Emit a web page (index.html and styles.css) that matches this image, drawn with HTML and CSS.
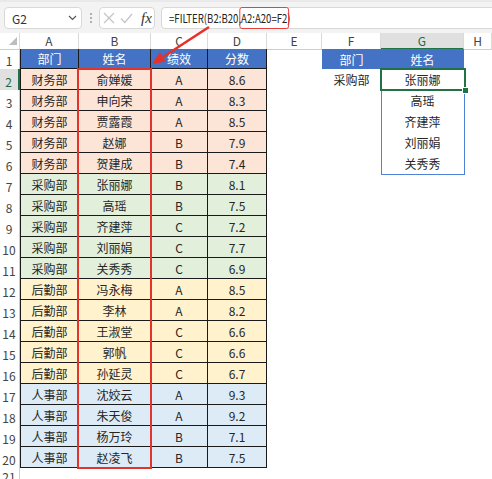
FILE: index.html
```html
<!DOCTYPE html>
<html lang="zh-CN">
<head>
<meta charset="utf-8">
<link rel="stylesheet" href="styles.css">
</head>
<body>
<div class="app">
  <div class="toolbar">
    <div class="namebox"><span>G2</span><svg class="chev" width="9" height="6" viewBox="0 0 9 6"><path d="M1 1l3.5 3.5L8 1" fill="none" stroke="#555" stroke-width="1.2"/></svg></div>
    <div class="grip"><i></i><i></i><i></i></div>
    <div class="btns">
      <svg width="12" height="12" viewBox="0 0 12 12"><path d="M1 1l10 10M11 1L1 11" stroke="#c4c4c4" stroke-width="1.2" fill="none"/></svg>
      <svg width="13" height="11" viewBox="0 0 13 11"><path d="M1 5.5l3.8 4L12 1" stroke="#c4c4c4" stroke-width="1.2" fill="none"/></svg>
      <span class="fx">fx</span>
    </div>
    <div class="formula"><span class="ftext">=FILTER(B2:B20,<span class="hl">A2:A20=F2</span>)</span></div>
  </div>

  <div class="sheet">
    <div class="row colhead">
      <div class="ch corner"><svg width="20" height="16" viewBox="0 0 20 16"><polygon points="17,4 17,12 9,12" fill="#bdbdbd"/></svg></div>
      <div class="ch">A</div><div class="ch">B</div><div class="ch">C</div><div class="ch">D</div><div class="ch">E</div><div class="ch">F</div><div class="ch sel">G</div><div class="ch">H</div>
    </div>
    <div class="row r1">
      <div class="rh">1</div>
      <div class="c t a hd">部门</div><div class="c t hd">姓名</div><div class="c t hd">绩效</div><div class="c t hd">分数</div>
      <div class="c"></div><div class="c hd">部门</div><div class="c hd">姓名</div><div class="c"></div>
    </div>
    <div class="row">
      <div class="rh sel">2</div>
      <div class="c t a p">财务部</div><div class="c t p">俞婵媛</div><div class="c t p">A</div><div class="c t p">8.6</div>
      <div class="c"></div><div class="c">采购部</div><div class="c">张丽娜</div><div class="c"></div>
    </div>
    <div class="row">
      <div class="rh">3</div>
      <div class="c t a p">财务部</div><div class="c t p">申向荣</div><div class="c t p">A</div><div class="c t p">8.3</div>
      <div class="c"></div><div class="c"></div><div class="c">高瑶</div><div class="c"></div>
    </div>
    <div class="row">
      <div class="rh">4</div>
      <div class="c t a p">财务部</div><div class="c t p">贾露霞</div><div class="c t p">A</div><div class="c t p">8.5</div>
      <div class="c"></div><div class="c"></div><div class="c">齐建萍</div><div class="c"></div>
    </div>
    <div class="row">
      <div class="rh">5</div>
      <div class="c t a p">财务部</div><div class="c t p">赵娜</div><div class="c t p">B</div><div class="c t p">7.9</div>
      <div class="c"></div><div class="c"></div><div class="c">刘丽娟</div><div class="c"></div>
    </div>
    <div class="row">
      <div class="rh">6</div>
      <div class="c t a p">财务部</div><div class="c t p">贺建成</div><div class="c t p">B</div><div class="c t p">7.4</div>
      <div class="c"></div><div class="c"></div><div class="c">关秀秀</div><div class="c"></div>
    </div>
    <div class="row">
      <div class="rh">7</div>
      <div class="c t a g">采购部</div><div class="c t g">张丽娜</div><div class="c t g">B</div><div class="c t g">8.1</div>
      <div class="c"></div><div class="c"></div><div class="c"></div><div class="c"></div>
    </div>
    <div class="row">
      <div class="rh">8</div>
      <div class="c t a g">采购部</div><div class="c t g">高瑶</div><div class="c t g">B</div><div class="c t g">7.5</div>
      <div class="c"></div><div class="c"></div><div class="c"></div><div class="c"></div>
    </div>
    <div class="row">
      <div class="rh">9</div>
      <div class="c t a g">采购部</div><div class="c t g">齐建萍</div><div class="c t g">C</div><div class="c t g">7.2</div>
      <div class="c"></div><div class="c"></div><div class="c"></div><div class="c"></div>
    </div>
    <div class="row">
      <div class="rh">10</div>
      <div class="c t a g">采购部</div><div class="c t g">刘丽娟</div><div class="c t g">C</div><div class="c t g">7.7</div>
      <div class="c"></div><div class="c"></div><div class="c"></div><div class="c"></div>
    </div>
    <div class="row">
      <div class="rh">11</div>
      <div class="c t a g">采购部</div><div class="c t g">关秀秀</div><div class="c t g">C</div><div class="c t g">6.9</div>
      <div class="c"></div><div class="c"></div><div class="c"></div><div class="c"></div>
    </div>
    <div class="row">
      <div class="rh">12</div>
      <div class="c t a y">后勤部</div><div class="c t y">冯永梅</div><div class="c t y">A</div><div class="c t y">8.5</div>
      <div class="c"></div><div class="c"></div><div class="c"></div><div class="c"></div>
    </div>
    <div class="row">
      <div class="rh">13</div>
      <div class="c t a y">后勤部</div><div class="c t y">李林</div><div class="c t y">A</div><div class="c t y">8.2</div>
      <div class="c"></div><div class="c"></div><div class="c"></div><div class="c"></div>
    </div>
    <div class="row">
      <div class="rh">14</div>
      <div class="c t a y">后勤部</div><div class="c t y">王淑堂</div><div class="c t y">C</div><div class="c t y">6.6</div>
      <div class="c"></div><div class="c"></div><div class="c"></div><div class="c"></div>
    </div>
    <div class="row">
      <div class="rh">15</div>
      <div class="c t a y">后勤部</div><div class="c t y">郭帆</div><div class="c t y">C</div><div class="c t y">6.6</div>
      <div class="c"></div><div class="c"></div><div class="c"></div><div class="c"></div>
    </div>
    <div class="row">
      <div class="rh">16</div>
      <div class="c t a y">后勤部</div><div class="c t y">孙延灵</div><div class="c t y">C</div><div class="c t y">6.7</div>
      <div class="c"></div><div class="c"></div><div class="c"></div><div class="c"></div>
    </div>
    <div class="row">
      <div class="rh">17</div>
      <div class="c t a b">人事部</div><div class="c t b">沈姣云</div><div class="c t b">A</div><div class="c t b">9.3</div>
      <div class="c"></div><div class="c"></div><div class="c"></div><div class="c"></div>
    </div>
    <div class="row">
      <div class="rh">18</div>
      <div class="c t a b">人事部</div><div class="c t b">朱天俊</div><div class="c t b">A</div><div class="c t b">9.2</div>
      <div class="c"></div><div class="c"></div><div class="c"></div><div class="c"></div>
    </div>
    <div class="row">
      <div class="rh">19</div>
      <div class="c t a b">人事部</div><div class="c t b">杨万玲</div><div class="c t b">B</div><div class="c t b">7.1</div>
      <div class="c"></div><div class="c"></div><div class="c"></div><div class="c"></div>
    </div>
    <div class="row">
      <div class="rh">20</div>
      <div class="c t a b">人事部</div><div class="c t b">赵凌飞</div><div class="c t b">B</div><div class="c t b">7.5</div>
      <div class="c"></div><div class="c"></div><div class="c"></div><div class="c"></div>
    </div>
    <div class="row last">
      <div class="rh">21</div>
      <div class="c"></div><div class="c"></div><div class="c"></div><div class="c"></div>
      <div class="c"></div><div class="c"></div><div class="c"></div><div class="c"></div>
    </div>

    <div class="range-red"></div>
    <div class="spill"></div>
    <div class="selection"><span class="handle"></span></div>
  </div>

  <svg class="arrow" width="492" height="479" viewBox="0 0 492 479">
    <line x1="209" y1="27" x2="163" y2="57" stroke="#e8302a" stroke-width="2.6"/>
    <polygon points="152,64 165.8,61.4 159.8,52.2" fill="#e8302a"/>
  </svg>
</div>
</body>
</html>
```

FILE: styles.css
```css
* { box-sizing: border-box; }

body {
  margin: 0;
  background: #fff;
  font-family: "Noto Sans CJK SC", "Noto Sans", sans-serif;
  color: #262626;
}

.app {
  position: relative;
  width: 492px;
  height: 479px;
  overflow: hidden;
}

/* ---------- formula toolbar ---------- */
.toolbar {
  height: 33px;
  background: #f3f3f3;
  border-top: 2px solid #e9e9e9;
  display: flex;
  align-items: flex-start;
  padding: 5px 0 0 4px;
}

.namebox {
  width: 78px;
  height: 22px;
  background: #fff;
  border: 1px solid #d8d8d8;
  border-radius: 4px;
  display: flex;
  align-items: center;
  justify-content: space-between;
  padding: 0 4px 0 7px;
  font-size: 12px;
  color: #333;
}

.grip {
  width: 17px;
  height: 22px;
  display: flex;
  flex-direction: column;
  align-items: center;
  justify-content: center;
  gap: 2px;
}
.grip i {
  width: 2px;
  height: 2px;
  background: #9a9a9a;
  border-radius: 50%;
}

.btns {
  width: 56px;
  height: 22px;
  background: #fff;
  border: 1px solid #d8d8d8;
  border-radius: 4px;
  display: flex;
  align-items: center;
  padding: 0 0 0 3px;
  gap: 5px;
}
.fx {
  font-family: "Liberation Serif", "DejaVu Serif", serif;
  font-style: italic;
  font-size: 15px;
  color: #333;
  margin-left: 3px;
  line-height: 20px;
}

.formula {
  flex: 1;
  margin-left: 6px;
  margin-right: -6px;
  height: 22px;
  background: #fff;
  border: 1px solid #d8d8d8;
  border-radius: 4px;
  padding-left: 7px;
  font-family: "Noto Sans CJK SC", "Noto Sans", sans-serif;
  font-size: 12px;
  line-height: 20px;
  color: #222;
  white-space: nowrap;
}
.ftext {
  display: inline-block;
  transform: scaleX(0.8);
  transform-origin: left center;
}
.hl {
  position: relative;
  display: inline-block;
}
.hl::after {
  content: "";
  position: absolute;
  left: -2px;
  right: -2px;
  top: -1px;
  bottom: -1px;
  border: 1.5px solid #e8302a;
  border-radius: 3px;
}

/* ---------- sheet ---------- */
.sheet {
  position: relative;
}

.row {
  display: grid;
  grid-template-columns: 20px 59px 72px 57px 59px 55px 59px 83px 1fr;
  height: 21px;
}
.colhead { height: 16px; }
.r1 { height: 20px; }

.ch {
  border-right: 1px solid #dadada;
  border-bottom: 1px solid #cfcfcf;
  font-size: 12px;
  line-height: 15px;
  color: #444;
  text-align: center;
}
.ch.corner svg { display: block; }
.ch.sel {
  background: #e0e0e0;
  border-bottom: 2px solid #217346;
  color: #1f6b41;
}

.rh {
  border-right: 1px solid #cfcfcf;
  font-size: 12px;
  line-height: 14px;
  color: #444;
  display: flex;
  align-items: flex-end;
  justify-content: center;
  padding: 0 1px 1px 0;
}
.last .rh {
  align-items: flex-start;
  padding-top: 2px;
}
.rh.sel {
  background: #e0e0e0;
  border-right: 2px solid #217346;
  color: #1f6b41;
}

.c {
  display: flex;
  align-items: center;
  justify-content: center;
  font-size: 12px;
  white-space: nowrap;
}

.t {
  border-right: 1px solid #1a1a1a;
  border-bottom: 1px solid #1a1a1a;
}
.t.a { border-left: 1px solid #1a1a1a; }

.hd { background: #4472c4; color: #fff; }
.p { background: #fce4d6; }
.g { background: #e2efda; }
.y { background: #fff2cc; }
.b { background: #ddebf7; }

/* ---------- overlays ---------- */
.range-red {
  position: absolute;
  left: 77px;
  top: 35px;
  width: 75px;
  height: 401px;
  border: 2px solid #e0342c;
  pointer-events: none;
}

.spill {
  position: absolute;
  left: 381px;
  top: 36px;
  width: 84px;
  height: 106px;
  border: 1px solid #4f81d8;
  pointer-events: none;
}

.selection {
  position: absolute;
  left: 380px;
  top: 35px;
  width: 86px;
  height: 23px;
  border: 2px solid #217346;
  pointer-events: none;
}
.handle {
  position: absolute;
  right: -5px;
  bottom: -5px;
  width: 7px;
  height: 7px;
  background: #217346;
  border: 1px solid #fff;
}

.arrow {
  position: absolute;
  left: 0;
  top: 0;
  pointer-events: none;
}
```
